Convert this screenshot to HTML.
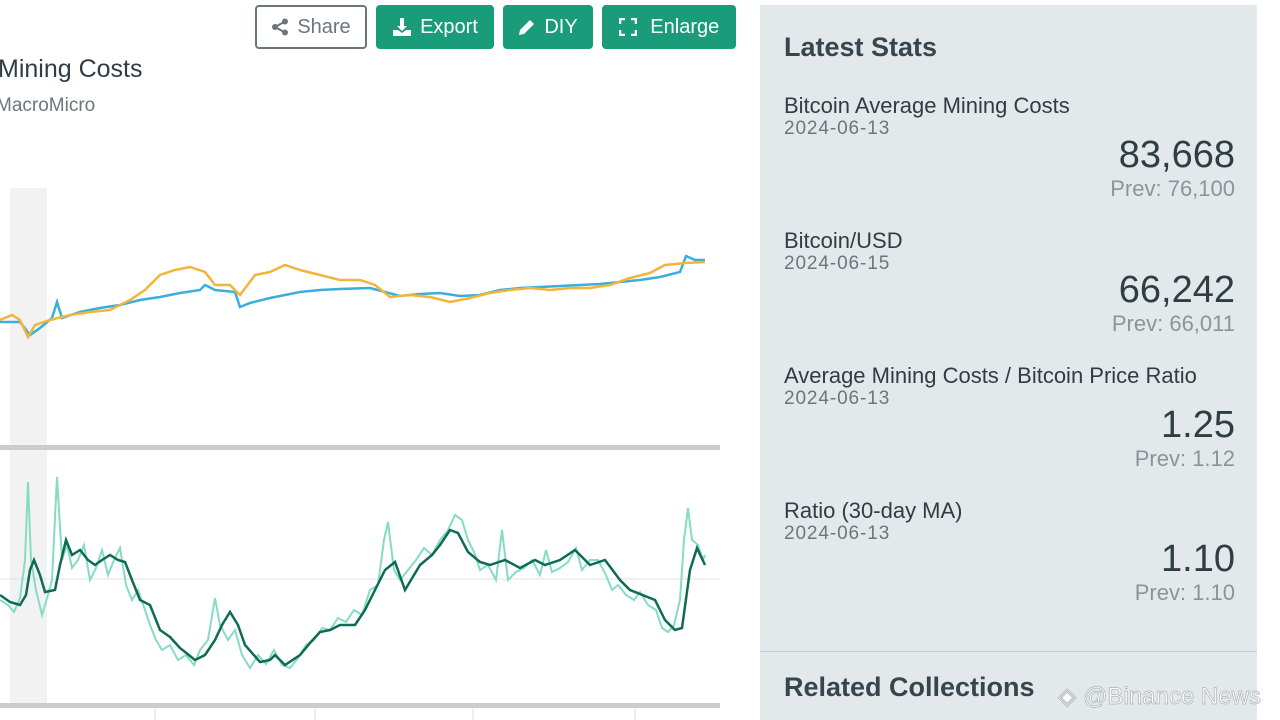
<!DOCTYPE html>
<html><head><style>
body{margin:0;width:1280px;height:720px;overflow:hidden;background:#fff;font-family:"Liberation Sans",sans-serif;position:relative}
.btn{position:absolute;top:5px;height:44px;border-radius:4px;background:#1a9c7b;color:#fff;font-size:20px;display:flex;align-items:center;justify-content:center;gap:8px;box-sizing:border-box}
.share{background:#fff;border:2px solid #6c757d;color:#6c757d}
.panel{position:absolute;left:760px;top:5px;width:497px;height:715px;background:#e3e8eb}
.t{position:absolute;left:24px;color:#2f3d44;white-space:nowrap}
.v{position:absolute;right:22px;text-align:right}
.big{font-size:38px;color:#2f3d44;line-height:42px}
.prev{font-size:22px;color:#8a959b;line-height:24px}
.lab{font-size:22px;color:#2f3d44}
.dt{font-size:19px;color:#6b777d;letter-spacing:0.9px}
.h{font-size:27px;font-weight:bold;color:#37464d}
</style></head><body>
<div style="position:absolute;left:-2px;top:55px;font-size:25px;color:#2f3d44">Mining Costs</div>
<div style="position:absolute;left:-4px;top:95px;font-size:19px;color:#6b777d">MacroMicro</div>
<div class="btn share" style="left:255px;width:112px"><svg width="18" height="18" viewBox="0 0 18 18"><circle cx="14" cy="3.5" r="3" fill="#6c757d"/><circle cx="4" cy="9" r="3" fill="#6c757d"/><circle cx="14" cy="14.5" r="3" fill="#6c757d"/><path d="M14 3.5L4 9L14 14.5" stroke="#6c757d" stroke-width="2" fill="none"/></svg>Share</div>
<div class="btn" style="left:376px;width:118px"><svg width="20" height="20" viewBox="0 0 20 20"><path d="M8 1h4v8h3l-5 5-5-5h3z" fill="#fff"/><path d="M1 13h5l4 3 4-3h5v6H1z" fill="#fff"/></svg>Export</div>
<div class="btn" style="left:503px;width:90px"><svg width="18" height="18" viewBox="0 0 18 18"><path d="M1 17l1-5L12 2l4 4L6 16z" fill="#fff"/></svg>DIY</div>
<div class="btn" style="left:602px;width:134px"><svg width="18" height="18" viewBox="0 0 18 18" fill="none" stroke="#fff" stroke-width="2.5"><path d="M1 6V1h5M12 1h5v5M17 12v5h-5M6 17H1v-5"/></svg>&nbsp;Enlarge</div>
<svg style="position:absolute;left:0;top:0" width="720" height="720">
<rect x="10" y="188" width="37" height="515" fill="#f2f2f2"/>
<rect x="0" y="445" width="720" height="5" fill="#ccc"/>
<rect x="0" y="703" width="720" height="5" fill="#ccc"/>
<line x1="0" y1="579" x2="720" y2="579" stroke="#e0e0e0"/>
<g stroke="#ddd"><line x1="155" y1="708" x2="155" y2="720"/><line x1="315" y1="708" x2="315" y2="720"/><line x1="473" y1="708" x2="473" y2="720"/><line x1="635" y1="708" x2="635" y2="720"/></g>
<polyline fill="none" stroke="#3aaedc" stroke-width="2.5" points="0,322 20,322 30,335 40,328 52,318 57,302 62,318 80,312 100,308 120,305 140,300 160,297 180,293 200,290 205,285 215,290 235,292 240,307 250,303 270,298 300,292 320,290 340,289 370,288 385,292 400,296 420,294 440,293 460,296 480,295 500,290 520,288 540,287 560,286 580,285 600,284 620,282 640,280 660,277 680,272 686,256 695,260 705,260"/>
<polyline fill="none" stroke="#f4b43a" stroke-width="2.5" points="0,320 12,315 20,320 28,337 35,325 50,320 70,315 90,312 110,310 130,300 145,290 160,275 175,270 190,267 205,272 215,285 230,285 240,295 255,275 270,272 285,265 300,270 320,275 340,280 360,280 375,285 390,297 410,295 430,297 450,302 470,298 490,293 510,290 530,288 550,290 570,288 590,288 610,285 630,278 650,273 665,265 685,263 705,262"/>
<polyline fill="none" stroke="#86dcc3" stroke-width="2" points="0,600 8,605 14,612 20,598 25,560 28,482 31,560 36,590 42,615 48,595 52,580 57,477 62,560 67,545 72,568 78,560 84,545 90,580 96,568 102,550 108,575 114,560 120,548 126,585 132,600 138,590 145,610 150,625 156,640 162,650 170,645 178,660 186,655 194,665 200,650 208,640 215,598 220,625 228,640 235,630 242,655 250,668 258,655 266,664 274,650 282,665 290,668 298,658 306,645 314,640 322,628 330,630 338,618 346,622 354,610 362,615 370,590 378,585 384,540 388,522 394,570 400,580 408,570 416,560 424,548 432,555 440,540 448,530 455,515 462,520 468,540 474,552 480,570 488,565 496,580 502,530 508,580 516,572 524,568 532,560 540,575 546,550 552,572 560,568 568,562 576,548 582,570 590,560 598,560 606,575 612,590 618,585 626,595 634,600 640,592 648,605 656,610 662,628 668,632 674,625 680,600 684,540 688,508 692,540 698,545 703,560 705,555"/>
<polyline fill="none" stroke="#0f6b54" stroke-width="2.5" points="0,595 10,602 20,605 26,595 30,570 34,560 40,575 45,592 55,590 60,565 66,540 72,555 80,550 88,560 95,565 102,560 110,555 118,560 125,562 132,580 140,600 150,605 160,630 170,637 180,648 195,660 205,655 215,640 222,625 230,612 238,625 245,645 260,662 270,660 275,655 285,665 300,655 310,643 320,632 330,630 340,625 355,625 365,610 375,590 385,570 395,562 405,590 420,565 432,555 440,545 450,530 458,533 468,552 480,562 490,565 505,560 520,568 535,560 545,565 560,560 575,550 590,565 605,560 620,580 630,590 645,596 655,600 665,620 675,630 682,628 690,570 697,548 705,565"/>
</svg>
<div class="panel">
<div class="t h" style="top:27px">Latest Stats</div>
<div class="t lab" style="top:88px">Bitcoin Average Mining Costs</div>
<div class="t dt" style="top:113px">2024-06-13</div>
<div class="v big" style="top:129px">83,668</div>
<div class="v prev" style="top:172px">Prev: 76,100</div>
<div class="t lab" style="top:223px">Bitcoin/USD</div>
<div class="t dt" style="top:248px">2024-06-15</div>
<div class="v big" style="top:264px">66,242</div>
<div class="v prev" style="top:307px">Prev: 66,011</div>
<div class="t lab" style="top:358px">Average Mining Costs / Bitcoin Price Ratio</div>
<div class="t dt" style="top:383px">2024-06-13</div>
<div class="v big" style="top:399px">1.25</div>
<div class="v prev" style="top:442px">Prev: 1.12</div>
<div class="t lab" style="top:493px">Ratio (30-day MA)</div>
<div class="t dt" style="top:518px">2024-06-13</div>
<div class="v big" style="top:533px">1.10</div>
<div class="v prev" style="top:576px">Prev: 1.10</div>
<div style="position:absolute;left:0;top:646px;width:497px;height:1px;background:#c9d0d4"></div>
<div class="t h" style="top:667px">Related Collections</div>
</div>
<div style="position:absolute;left:1058px;top:682px;font-size:24px;color:#fff;-webkit-text-stroke:0.7px #a9b1b5;white-space:nowrap">◈ @Binance News</div>
</body></html>
